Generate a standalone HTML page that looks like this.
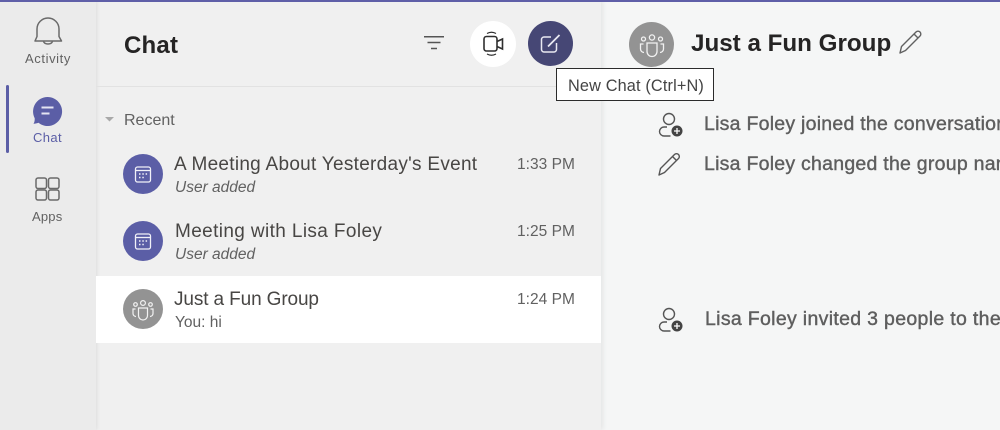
<!DOCTYPE html>
<html><head><meta charset="utf-8"><style>
html,body{margin:0;padding:0;width:1000px;height:430px;overflow:hidden;background:#f5f6f6}
body{position:relative;font-family:"Liberation Sans",sans-serif}
#w{position:absolute;left:0;top:0;width:1000px;height:430px;overflow:hidden;filter:blur(.35px)}
.a{position:absolute}
.t{position:absolute;white-space:nowrap;line-height:1}
.m{font-size:19.5px;color:#5e5e5e;-webkit-text-stroke:.4px #5e5e5e;letter-spacing:.25px}
svg{position:absolute;overflow:visible}
</style></head><body><div id="w">
<div class="a" style="left:601px;top:0;width:399px;height:430px;background:#f5f6f6"></div>
<div class="a" style="left:96px;top:0;width:505px;height:430px;background:#f0f0f0;box-shadow:2px 0 5px rgba(0,0,0,.07)"></div>
<div class="a" style="left:0;top:0;width:96px;height:430px;background:#ebebeb;box-shadow:1px 0 4px rgba(0,0,0,.08)"></div>
<div class="a" style="left:0;top:0;width:1000px;height:2px;background:#5f5fa8"></div>
<div class="a" style="left:96px;top:86px;width:505px;height:1px;background:#e2e2e2"></div>
<div class="a" style="left:96px;top:276px;width:505px;height:67px;background:#fff"></div>

<!-- rail -->
<svg style="left:0;top:0" width="96" height="230" fill="none" stroke="#6a6a6a" stroke-width="1.5">
<path d="M37 36.500V29a11 11 0 0 1 22 0v7.500l2.500 4.500H35z" stroke-linejoin="round"/>
<path d="M43.500 41.500a4.700 3.500 0 0 0 9 0"/>
<rect x="36" y="178" width="10.500" height="10.500" rx="2"/><rect x="48.500" y="178" width="10.500" height="10.500" rx="2"/>
<rect x="36" y="190" width="10.500" height="10" rx="2"/><rect x="48.500" y="190" width="10.500" height="10" rx="2"/>
<path d="M47.500 97a14.500 14.500 0 1 1-9 25.800c-1.500.6-3.500 1-5 .9 1-1.400 1.300-3.400 1.200-5.500A14.500 14.500 0 0 1 47.500 97z" fill="#5b5ea6" stroke="none"/>
<path d="M41.500 107.500h12M41.500 113.500h8" stroke="#e4e4f2" stroke-width="2"/>
</svg>
<div class="a" style="left:5.500px;top:85px;width:3px;height:68px;background:#5b5ea6;border-radius:1.500px"></div>
<div class="t" style="left:25px;top:51.500px;font-size:13px;color:#616161;letter-spacing:.6px">Activity</div>
<div class="t" style="left:33px;top:130.500px;font-size:13px;color:#5b5ea6;letter-spacing:.4px">Chat</div>
<div class="t" style="left:32px;top:209.500px;font-size:13px;color:#616161;letter-spacing:.2px">Apps</div>

<!-- header -->
<div class="t" style="left:124px;top:34px;font-size:24px;font-weight:bold;color:#252424;letter-spacing:.2px">Chat</div>
<svg style="left:0;top:0" width="600" height="80" fill="none" stroke="#555" stroke-width="1.500">
<path d="M424 36.800h20M427.500 42.500h13M431 48.500h6"/>
</svg>
<div class="a" style="left:470px;top:21px;width:46px;height:46px;border-radius:50%;background:#fff"></div>
<svg style="left:0;top:0" width="600" height="80" fill="none" stroke="#2f2f2f" stroke-width="1.600">
<rect x="484" y="36.500" width="13" height="14.500" rx="2.500"/>
<path d="M497 41.500l5.500-2.500v10l-5.500-2.500"/>
<path d="M487 33.500q4.500-2.500 9 0M487 54q4.500 2.500 9 0" stroke-width="1.200"/>
</svg>
<div class="a" style="left:528px;top:21px;width:45px;height:45px;border-radius:50%;background:#464775"></div>
<svg style="left:0;top:0" width="600" height="80" fill="none" stroke="#e9e9f2" stroke-width="1.500">
<path d="M551 37h-7a2.500 2.500 0 0 0-2.500 2.500v10a2.500 2.500 0 0 0 2.500 2.500h10a2.500 2.500 0 0 0 2.500-2.500v-6.500"/>
<path d="M548 46.500l11.500-11.500" stroke-width="1.800"/>
</svg>

<!-- list -->
<svg style="left:0;top:0" width="120" height="130"><path d="M105 117h9l-4.500 4.500z" fill="#a9a9a9"/></svg>
<div class="t" style="left:124px;top:113px;font-size:16px;color:#616161">Recent</div>

<div class="a" style="left:123px;top:154px;width:40px;height:40px;border-radius:50%;background:#5b5ea6"></div>
<div class="a" style="left:123px;top:221px;width:40px;height:40px;border-radius:50%;background:#5b5ea6"></div>
<div class="a" style="left:123px;top:289px;width:40px;height:40px;border-radius:50%;background:#939393"></div>

<svg style="left:0;top:0" width="200" height="270" fill="none" stroke="#f1f1f8" stroke-width="1.300">
<rect x="135.500" y="167" width="15" height="15" rx="2"/><path d="M136 170.500h14"/>
<path d="M139 174h1.500M142.300 174h1.500M145.600 174h1.500M139 177.500h1.500M142.300 177.500h1.500" stroke-width="1.600"/>
<rect x="135.500" y="234" width="15" height="15" rx="2"/><path d="M136 237.500h14"/>
<path d="M139 241h1.500M142.300 241h1.500M145.600 241h1.500M139 244.500h1.500M142.300 244.500h1.500" stroke-width="1.600"/>
</svg>

<svg style="left:0;top:0" width="200" height="340" fill="none" stroke="#f2f2f2" stroke-width="1.200">
<circle cx="143" cy="303" r="2.400"/><circle cx="135.500" cy="304.500" r="1.800"/><circle cx="150.500" cy="304.500" r="1.800"/>
<path d="M138.500 308h9v7.500a4.500 4.500 0 0 1-9 0z"/>
<path d="M135.500 309h-2.500v4.500a3 3 0 0 0 3 3M150.500 309h2.500v4.500a3 3 0 0 1-3 3"/>
</svg>

<div class="t" style="left:174px;top:154.500px;font-size:19px;color:#484644;letter-spacing:.28px">A Meeting About Yesterday's Event</div>
<div class="t" style="left:175px;top:180px;font-size:15.500px;font-style:italic;color:#616161">User added</div>
<div class="t" style="left:517px;top:157px;font-size:15.500px;color:#616161;letter-spacing:.03px">1:33 PM</div>

<div class="t" style="left:175px;top:221.500px;font-size:19px;color:#484644;letter-spacing:.38px">Meeting with Lisa Foley</div>
<div class="t" style="left:175px;top:247px;font-size:15.500px;font-style:italic;color:#616161">User added</div>
<div class="t" style="left:517px;top:224px;font-size:15.500px;color:#616161;letter-spacing:.03px">1:25 PM</div>

<div class="t" style="left:174px;top:289.500px;font-size:19px;color:#484644;letter-spacing:-.12px">Just a Fun Group</div>
<div class="t" style="left:175px;top:315px;font-size:15.500px;color:#616161">You: hi</div>
<div class="t" style="left:517px;top:292px;font-size:15.500px;color:#616161;letter-spacing:.03px">1:24 PM</div>

<!-- right header -->
<div class="a" style="left:629px;top:22px;width:45px;height:45px;border-radius:50%;background:#939393"></div>
<svg style="left:0;top:0" width="700" height="70" fill="none" stroke="#f2f2f2" stroke-width="1.300">
<circle cx="652" cy="37.500" r="2.600"/><circle cx="643.500" cy="39" r="2"/><circle cx="660.500" cy="39" r="2"/>
<path d="M647 43h10v8.500a5 5 0 0 1-10 0z"/>
<path d="M643.500 44h-3v5a3.500 3.500 0 0 0 3.500 3.500M660.500 44h3v5a3.500 3.500 0 0 1-3.500 3.500"/>
</svg>
<div class="t" style="left:691px;top:32px;font-size:24.200px;font-weight:bold;color:#252424">Just a Fun Group</div>
<svg style="left:0;top:0" width="940" height="70" fill="none" stroke="#616161" stroke-width="1.400" stroke-linejoin="round">
<path d="M900 53l1.500-6.500L916 32a2.800 2.800 0 0 1 4 4l-14.500 14.500z"/><path d="M914 34l4 4"/>
</svg>

<!-- tooltip -->
<div class="a" style="left:556px;top:68px;width:158px;height:33px;background:#fff;border:1px solid #2b2b2b;box-sizing:border-box"></div>
<div class="t" style="left:568px;top:78px;font-size:16.300px;color:#444;letter-spacing:.15px">New Chat (Ctrl+N)</div>

<!-- messages -->
<svg style="left:0;top:0" width="700" height="340" fill="none" stroke="#555" stroke-width="1.400">
<circle cx="669" cy="119" r="5.500"/>
<path d="M667 127h-3a4.500 4.500 0 0 0 0 9h6.500"/>
<circle cx="677" cy="131" r="5.500" fill="#444" stroke="none"/>
<path d="M674 131h6M677 128v6" stroke="#fff" stroke-width="1.300"/>
<circle cx="669" cy="314" r="5.500"/>
<path d="M667 322h-3a4.500 4.500 0 0 0 0 9h6.500"/>
<circle cx="677" cy="326" r="5.500" fill="#444" stroke="none"/>
<path d="M674 326h6M677 323v6" stroke="#fff" stroke-width="1.300"/>
<path d="M659 175l1.500-6.500 14-14a2.800 2.800 0 0 1 4 4l-14 14z" stroke-linejoin="round"/><path d="M672.500 156.500l4 4"/>
</svg>
<div class="t m" style="left:704px;top:114.500px">Lisa Foley joined the conversation.</div>
<div class="t m" style="left:704px;top:154.500px">Lisa Foley changed the group name</div>
<div class="t m" style="left:705px;top:309.500px;letter-spacing:.32px">Lisa Foley invited 3 people to the chat</div>
</div></body></html>
